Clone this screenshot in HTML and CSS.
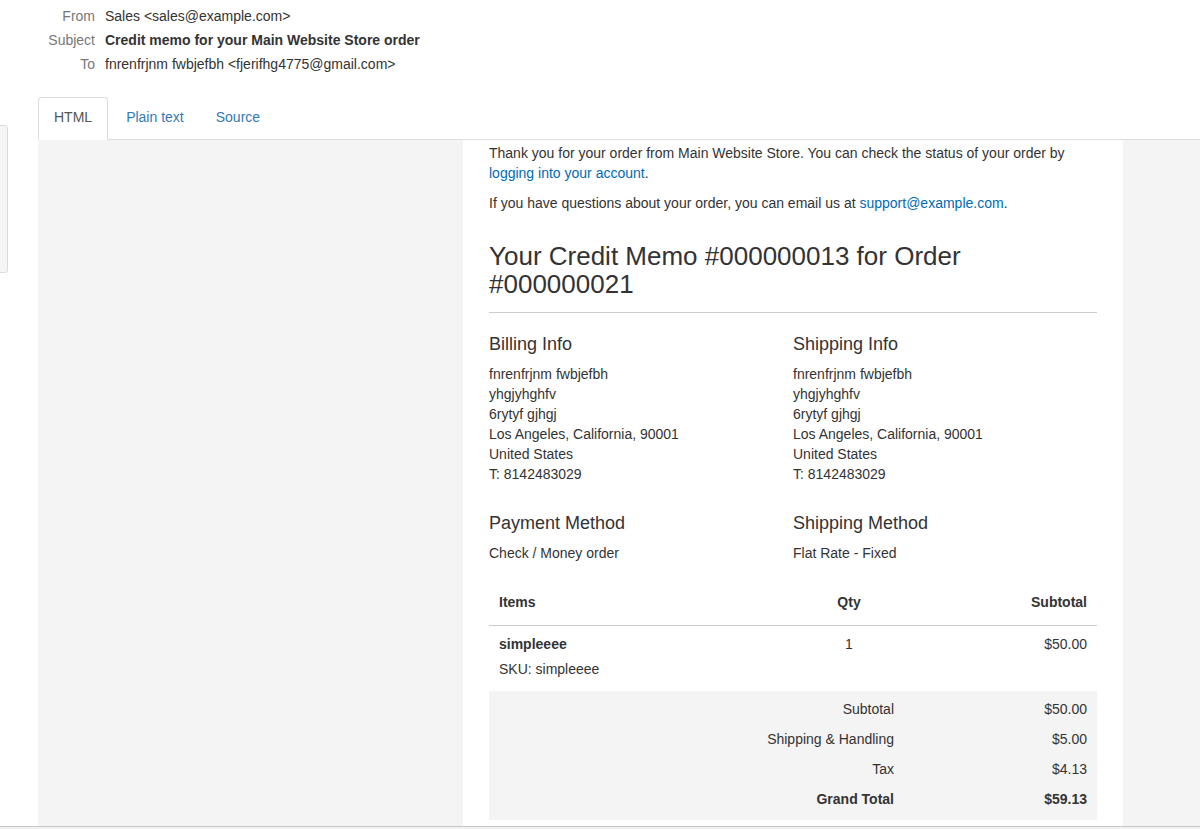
FILE: index.html
```html
<!DOCTYPE html>
<html>
<head>
<meta charset="utf-8">
<link rel="stylesheet" href="styles.css">
</head>
<body>
<div class="side-handle"></div>
<table class="headers">
  <tr><th>From</th><td>Sales &lt;sales@example.com&gt;</td></tr>
  <tr><th>Subject</th><td class="subject">Credit memo for your Main Website Store order</td></tr>
  <tr><th>To</th><td>fnrenfrjnm fwbjefbh &lt;fjerifhg4775@gmail.com&gt;</td></tr>
</table>
<ul class="tabs">
  <li class="active"><a>HTML</a></li>
  <li><a>Plain text</a></li>
  <li><a>Source</a></li>
</ul>
<div class="viewer">
  <div class="email">
    <p>Thank you for your order from Main Website Store. You can check the status of your order by <a>logging into your account</a>.</p>
    <p>If you have questions about your order, you can email us at <a>support@example.com</a>.</p>
    <h1>Your Credit Memo #000000013 for Order #000000021</h1>
    <div class="info-grid">
      <div class="info">
        <h3>Billing Info</h3>
        <p class="addr">fnrenfrjnm fwbjefbh<br>yhgjyhghfv<br>6rytyf gjhgj<br>Los Angeles, California, 90001<br>United States<br>T: 8142483029</p>
      </div>
      <div class="info">
        <h3>Shipping Info</h3>
        <p class="addr">fnrenfrjnm fwbjefbh<br>yhgjyhghfv<br>6rytyf gjhgj<br>Los Angeles, California, 90001<br>United States<br>T: 8142483029</p>
      </div>
      <div class="info method">
        <h3>Payment Method</h3>
        <p class="addr">Check / Money order</p>
      </div>
      <div class="info method">
        <h3>Shipping Method</h3>
        <p class="addr">Flat Rate - Fixed</p>
      </div>
    </div>
    <table class="items">
      <thead>
        <tr><th class="c-item">Items</th><th class="c-qty">Qty</th><th class="c-sub">Subtotal</th></tr>
      </thead>
      <tbody>
        <tr class="item-row">
          <td class="c-item"><p class="pname">simpleeee</p><p class="sku">SKU: simpleeee</p></td>
          <td class="c-qty">1</td>
          <td class="c-sub">$50.00</td>
        </tr>
      </tbody>
      <tfoot>
        <tr class="first"><td colspan="2">Subtotal</td><td>$50.00</td></tr>
        <tr><td colspan="2">Shipping &amp; Handling</td><td>$5.00</td></tr>
        <tr><td colspan="2">Tax</td><td>$4.13</td></tr>
        <tr class="last grand"><td colspan="2">Grand Total</td><td>$59.13</td></tr>
      </tfoot>
    </table>
  </div>
</div>
<div class="hscroll"></div>
</body>
</html>
```
FILE: styles.css
```css
html, body {
  margin: 0;
  padding: 0;
  background: #fff;
  overflow: hidden;
}
body {
  font-family: "Liberation Sans", Arial, sans-serif;
  font-size: 14px;
  line-height: 20px;
  color: #333;
  height: 829px;
  position: relative;
}
.side-handle {
  position: absolute;
  left: -10px;
  top: 125px;
  width: 16px;
  height: 146px;
  border: 1px solid #ddd;
  border-radius: 3px;
  background: #f5f5f5;
}
.headers {
  border-collapse: collapse;
  margin-top: 4px;
}
.headers th {
  width: 95px;
  text-align: right;
  font-weight: normal;
  color: #777;
  padding: 2px 10px 2px 0;
}
.headers td {
  padding: 2px 0;
  color: #333;
}
.headers td.subject {
  font-weight: bold;
}
.tabs {
  list-style: none;
  margin: 21px 0 0 38px;
  padding: 0;
  display: flex;
  border-bottom: 1px solid #ddd;
}
.tabs li {
  margin-bottom: -1px;
}
.tabs a {
  display: block;
  margin-right: 2px;
  padding: 9px 15px 12px;
  border: 1px solid transparent;
  border-radius: 4px 4px 0 0;
  color: #337ab7;
  cursor: pointer;
}
.tabs li:nth-child(3) a {
  padding-left: 13px;
}
.tabs li.active a {
  color: #555;
  background: #fff;
  border-color: #ddd #ddd transparent;
}
.viewer {
  margin-left: 38px;
  background: #f4f4f4;
  height: 686px;
  overflow: hidden;
  display: flex;
}
.email {
  margin-left: 425px;
  width: 608px;
  background: #fff;
  padding: 3px 26px 0;
  flex: none;
}
.email p {
  margin: 0 0 10px;
}
.email a {
  color: #006bb4;
}
.email h1 {
  font-weight: normal;
  font-size: 26px;
  line-height: 28px;
  margin: 29px 0 0;
  padding-bottom: 14px;
  border-bottom: 1px solid #ccc;
}
.info-grid {
  display: grid;
  grid-template-columns: 304px 304px;
}
.info h3 {
  font-weight: normal;
  font-size: 18px;
  line-height: 22px;
  margin: 20px 0 9px;
}
.info .addr {
  margin: 0;
}
.info.method h3 {
  margin-top: 28px;
  margin-bottom: 9px;
}
.items {
  width: 608px;
  border-collapse: collapse;
  margin-top: 19px;
}
.items th {
  font-weight: bold;
  padding: 10px 10px 13px;
  border-bottom: 1px solid #ccc;
}
.items .c-item {
  width: 285px;
  text-align: left;
}
.items .c-qty {
  width: 90px;
  text-align: center;
}
.items .c-sub {
  text-align: right;
}
.item-row td {
  vertical-align: top;
  padding: 8px 10px 12px;
}
.item-row .pname {
  font-weight: bold;
  margin: 0 0 5px;
}
.item-row .sku {
  margin: 0;
}
.items tfoot tr {
  background: #f4f4f4;
}
.items tfoot td {
  text-align: right;
  padding: 5px 10px;
}
.items tfoot tr.first td {
  padding-top: 8px;
}
.items tfoot tr.last td {
  padding-bottom: 11px;
}
.items tfoot tr.grand td {
  font-weight: bold;
}
.hscroll {
  border-top: 1px solid #c8c8c8;
  background: #f1f1f1;
  height: 3px;
}
```
